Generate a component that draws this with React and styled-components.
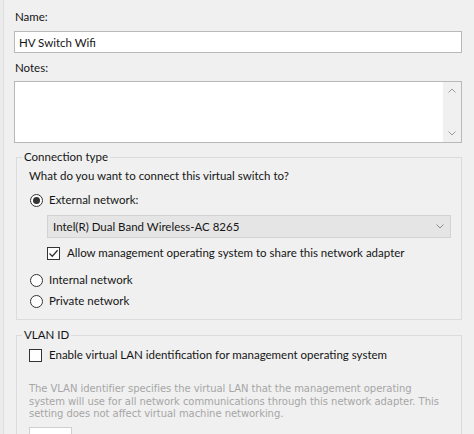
import React from "react";
import styled, { createGlobalStyle } from "styled-components";

const GlobalStyle = createGlobalStyle`
  html, body {
    margin: 0;
    padding: 0;
    background: #ebebeb;
    overflow: hidden;
  }
  * { box-sizing: border-box; }
`;

const Page = styled.div`
  width: 471px;
  height: 434px;
  margin-left: 3px;
  border-left: 1px solid #dedede;
  background: #f0f0f0;
  padding: 9px 12px 0 10px;
  font-family: "Lato", "Noto Sans", sans-serif;
  font-size: 11.5px;
  color: #151515;
  overflow: hidden;
`;

const Label = styled.div`
  line-height: 16px;
  margin-top: ${({ $top }) => $top || 0}px;
  margin-left: 1px;
`;

const TextBox = styled.div`
  height: 22px;
  margin-top: 6px;
  background: #fff;
  border: 1px solid #b9b9b9;
  padding: 0 4px;
  display: flex;
  align-items: center;
`;

const NotesBox = styled.div`
  height: 62px;
  margin-top: 5px;
  background: #fff;
  border: 1px solid #b9b9b9;
  display: flex;
`;

const NotesText = styled.div`
  flex: 1;
`;

const ScrollBar = styled.div`
  width: 18px;
  background: #f0f0f0;
  display: flex;
  flex-direction: column;
  justify-content: space-between;
  align-items: center;
  padding: 6px 0;
`;

const Group = styled.fieldset`
  margin: ${({ $top }) => $top}px 0 0 2px;
  padding: 0 10px ${({ $bottom }) => $bottom || 0}px 12px;
  border: 1px solid #dcdcdc;
  display: flex;
  flex-direction: column;
  align-items: flex-start;
`;

const Legend = styled.legend`
  line-height: 16px;
  padding: 0 2px;
  margin-left: -7px;
`;

const Line = styled.div`
  line-height: 16px;
  margin-top: ${({ $top }) => $top || 0}px;
`;

const OptionRow = styled.label`
  display: flex;
  align-items: center;
  gap: ${({ $gap }) => $gap || 6}px;
  line-height: 16px;
  margin-top: ${({ $top }) => $top || 0}px;
  margin-left: ${({ $indent }) => $indent || 0}px;
`;

const Radio = styled.span`
  width: 13px;
  height: 13px;
  margin-left: 1px;
  border-radius: 50%;
  border: 1px solid #333;
  background: #fff;
  display: flex;
  align-items: center;
  justify-content: center;
  &::after {
    content: "";
    width: 7px;
    height: 7px;
    border-radius: 50%;
    background: ${({ $checked }) => ($checked ? "#333" : "transparent")};
  }
`;

const Check = styled.span`
  width: 13px;
  height: 13px;
  border: 1px solid #333;
  background: #fff;
  display: flex;
  align-items: center;
  justify-content: center;
`;

const Select = styled.div`
  align-self: stretch;
  height: 23px;
  margin: 7px 0 0 18px;
  background: #e5e5e5;
  border: 1px solid #d3d3d3;
  padding: 0 6px 0 5px;
  display: flex;
  align-items: center;
  justify-content: space-between;
`;

const Hint = styled.p`
  margin: 20px 0 0 0;
  font-family: "DejaVu Sans", sans-serif;
  font-size: 10px;
  letter-spacing: -0.05px;
  line-height: 12.5px;
  white-space: nowrap;
  color: #a6a6a6;
`;

const SmallBox = styled.div`
  width: 43px;
  height: 22px;
  margin-top: 6px;
  background: #fff;
  border: 1px solid #cfcfcf;
`;

const Chevron = ({ up, color = "#9a9a9a" }) => (
  <svg width="8" height="5" viewBox="0 0 8 5">
    <path
      d={up ? "M0.5 4.5 L4 1 L7.5 4.5" : "M0.5 0.5 L4 4 L7.5 0.5"}
      fill="none"
      stroke={color}
      strokeWidth="1"
    />
  </svg>
);

const Tick = () => (
  <svg width="11" height="11" viewBox="0 0 11 11">
    <path d="M1.5 5.5 L4.3 8.3 L9.6 2.2" fill="none" stroke="#333" strokeWidth="1.3" />
  </svg>
);

const App = () => {
  return (
    <>
      <GlobalStyle />
      <Page>
        <Label>Name:</Label>
        <TextBox>HV Switch Wifi</TextBox>
        <Label $top={7}>Notes:</Label>
        <NotesBox>
          <NotesText />
          <ScrollBar>
            <Chevron up />
            <Chevron />
          </ScrollBar>
        </NotesBox>

        <Group $top={6} $bottom={10}>
          <Legend>Connection type</Legend>
          <Line $top={3}>What do you want to connect this virtual switch to?</Line>
          <OptionRow $top={8}>
            <Radio $checked />
            External network:
          </OptionRow>
          <Select>
            <span>Intel(R) Dual Band Wireless-AC 8265</span>
            <Chevron color="#8a8a8a" />
          </Select>
          <OptionRow $top={7} $indent={18} $gap={7}>
            <Check>
              <Tick />
            </Check>
            Allow management operating system to share this network adapter
          </OptionRow>
          <OptionRow $top={11}>
            <Radio />
            Internal network
          </OptionRow>
          <OptionRow $top={5}>
            <Radio />
            Private network
          </OptionRow>
        </Group>

        <Group $top={7}>
          <Legend>VLAN ID</Legend>
          <OptionRow $top={4} $gap={7}>
            <Check />
            Enable virtual LAN identification for management operating system
          </OptionRow>
          <Hint>
            The VLAN identifier specifies the virtual LAN that the management operating
            <br />
            system will use for all network communications through this network adapter. This
            <br />
            setting does not affect virtual machine networking.
          </Hint>
          <SmallBox />
        </Group>
      </Page>
    </>
  );
};

export default App;
